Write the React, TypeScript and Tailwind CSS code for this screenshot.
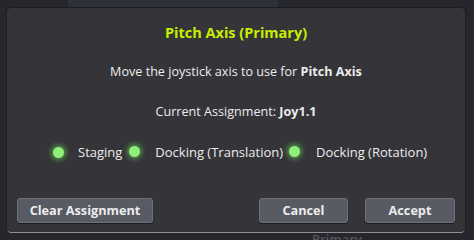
import React from 'react';

function Led() {
  return (
    <span className="inline-block w-[11px] h-[11px] rounded-full bg-[#8ef07a] shadow-[0_0_5px_2px_rgba(110,230,90,0.55)]" />
  );
}

function Btn({ label, className }: { label: string; className: string }) {
  return (
    <button
      type="button"
      className={`h-[25px] rounded-[3px] border border-[#6d717b] bg-[#585b64] text-[12.7px] font-bold text-[#ececec] shadow-[0_1px_1px_rgba(0,0,0,0.5)] ${className}`}
    >
      {label}
    </button>
  );
}

export default function App() {
  return (
    <div
      className="relative w-[474px] h-[240px] overflow-hidden bg-[#26272c] pt-[7px] pl-[6px]"
      style={{ fontFamily: '"Open Sans", "Noto Sans", sans-serif' }}
    >
      {/* background bits behind the dialog */}
      <div className="absolute left-[68px] top-0 w-[210px] h-[7px] bg-[#2e3138]" />
      <div className="absolute left-[312px] top-[230px] text-[13px] leading-[18px] font-semibold text-[#55565c]">Primary</div>

      <div className="relative flex flex-col w-[460px] h-[226px] rounded-[5px] border border-[#1d1d21] border-b-[#8d8d93] bg-[#353439]">
        <h1 className="mt-[15px] text-center text-[14.5px] font-bold leading-[20px] text-[#c6ee00]">
          Pitch Axis (Primary)
        </h1>
        <p className="mt-[20px] text-center text-[12.6px] leading-[18px] text-[#ececec]">
          Move the joystick axis to use for <span className="font-bold">Pitch Axis</span>
        </p>
        <p className="mt-[22px] text-center text-[12.6px] leading-[18px] text-[#ececec]">
          Current Assignment: <span className="font-bold">Joy1.1</span>
        </p>
        <div className="mt-[22px] flex items-center pl-[46px] text-[13px] leading-[18px] text-[#ececec]">
          <Led />
          <span className="ml-[14px]">Staging</span>
          <span className="ml-[7px]"><Led /></span>
          <span className="ml-[15px]">Docking (Translation)</span>
          <span className="ml-[6px]"><Led /></span>
          <span className="ml-[16px]">Docking (Rotation)</span>
        </div>
        <div className="mt-auto mb-[9px] flex items-center px-[10px]">
          <Btn label="Clear Assignment" className="w-[136px]" />
          <Btn label="Cancel" className="ml-auto w-[89px]" />
          <Btn label="Accept" className="ml-[17px] w-[90px]" />
        </div>
      </div>
    </div>
  );
}
